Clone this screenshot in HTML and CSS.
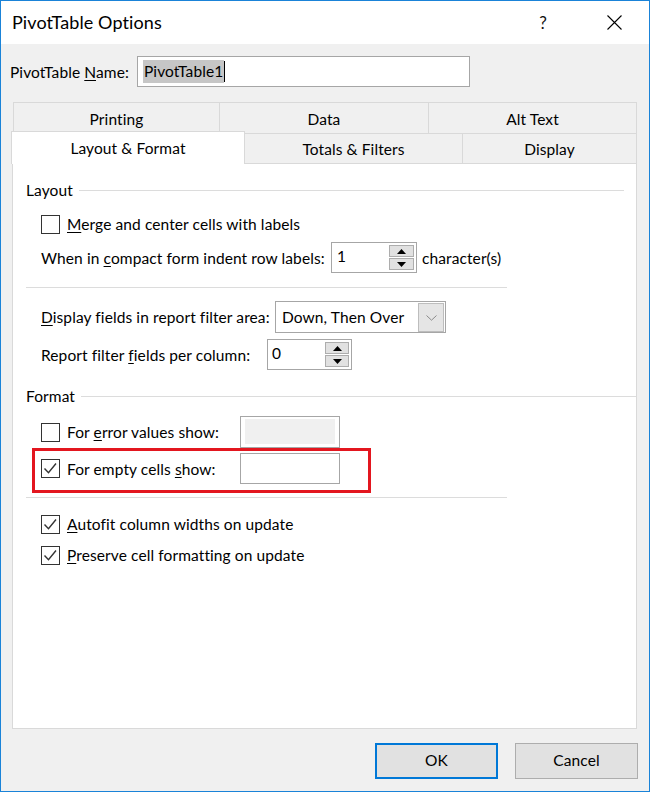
FILE: index.html
```html
<!DOCTYPE html>
<html lang="en">
<head>
<meta charset="utf-8">
<title>PivotTable Options</title>
<link rel="stylesheet" href="styles.css">
</head>
<body>
<div class="window">
  <div class="titlebar">
    <span class="title">PivotTable Options</span>
    <span class="help">?</span>
    <svg class="close" width="15" height="15" viewBox="0 0 15 15"><path d="M0.5 0.5 L14.5 14.5 M14.5 0.5 L0.5 14.5" stroke="#000" stroke-width="1.1" fill="none"/></svg>
  </div>

  <div class="name-row">
    <span class="name-label">PivotTable <u>N</u>ame:</span>
    <div class="textbox name-box"><span class="sel">PivotTable1</span><span class="caret"></span></div>
  </div>

  <div class="tabs">
    <div class="tab-row row1">
      <div class="tab t-printing">Printing</div>
      <div class="tab t-data">Data</div>
      <div class="tab t-alt">Alt Text</div>
    </div>
    <div class="tab-row row2">
      <div class="tab t-layout active">Layout &amp; Format</div>
      <div class="tab t-totals">Totals &amp; Filters</div>
      <div class="tab t-display">Display</div>
    </div>
  </div>

  <div class="panel">
    <div class="group-head head-layout">Layout</div>

    <div class="row check-row merge-row">
      <span class="checkbox"></span>
      <span class="label"><u>M</u>erge and center cells with labels</span>
    </div>

    <div class="row spin-row when-row">
      <span class="label fixed w-when">When in <u>c</u>ompact form indent row labels:</span>
      <div class="spin spin-when">
        <span class="spin-text">1</span>
        <div class="spin-btns">
          <span class="spin-btn"><svg width="9" height="5" viewBox="0 0 9 5"><path d="M0 5 L4.5 0 L9 5 Z" fill="#000"/></svg></span>
          <span class="spin-btn"><svg width="9" height="5" viewBox="0 0 9 5"><path d="M0 0 L4.5 5 L9 0 Z" fill="#000"/></svg></span>
        </div>
      </div>
      <span class="label after">character(s)</span>
    </div>

    <div class="separator sep-1"></div>

    <div class="row combo-row">
      <span class="label fixed w-display"><u>D</u>isplay fields in report filter area:</span>
      <div class="combo">
        <span class="combo-text">Down, Then Over</span>
        <span class="combo-btn"><svg width="11" height="6" viewBox="0 0 11 6"><path d="M0.5 0.5 L5.5 5.2 L10.5 0.5" stroke="#8a8a8a" stroke-width="1" fill="none"/></svg></span>
      </div>
    </div>

    <div class="row spin-row report-row">
      <span class="label fixed w-report">Report filter <u>f</u>ields per column:</span>
      <div class="spin spin-report">
        <span class="spin-text">0</span>
        <div class="spin-btns">
          <span class="spin-btn"><svg width="9" height="5" viewBox="0 0 9 5"><path d="M0 5 L4.5 0 L9 5 Z" fill="#000"/></svg></span>
          <span class="spin-btn"><svg width="9" height="5" viewBox="0 0 9 5"><path d="M0 0 L4.5 5 L9 0 Z" fill="#000"/></svg></span>
        </div>
      </div>
    </div>

    <div class="group-head head-format">Format</div>

    <div class="row input-row error-row">
      <span class="checkbox"></span>
      <span class="label fixed w-show">For <u>e</u>rror values show:</span>
      <div class="textbox small-box disabled"><span class="fill"></span></div>
    </div>

    <div class="row input-row empty-row">
      <span class="checkbox checked"><svg width="19" height="19" viewBox="0 0 19 19"><polyline points="3.5,9.5 7.5,13.8 15,4.5" stroke="#333" stroke-width="1.4" fill="none"/></svg></span>
      <span class="label fixed w-show">For empty cells <u>s</u>how:</span>
      <div class="textbox small-box"></div>
      <span class="highlight"></span>
    </div>

    <div class="separator sep-2"></div>

    <div class="row check-row autofit-row">
      <span class="checkbox checked"><svg width="19" height="19" viewBox="0 0 19 19"><polyline points="3.5,9.5 7.5,13.8 15,4.5" stroke="#333" stroke-width="1.4" fill="none"/></svg></span>
      <span class="label"><u>A</u>utofit column widths on update</span>
    </div>

    <div class="row check-row preserve-row">
      <span class="checkbox checked"><svg width="19" height="19" viewBox="0 0 19 19"><polyline points="3.5,9.5 7.5,13.8 15,4.5" stroke="#333" stroke-width="1.4" fill="none"/></svg></span>
      <span class="label"><u>P</u>reserve cell formatting on update</span>
    </div>
  </div>

  <div class="buttons">
    <button class="btn btn-default">OK</button>
    <button class="btn">Cancel</button>
  </div>
</div>
</body>
</html>
```

FILE: styles.css
```css
* { box-sizing: border-box; }

html, body {
  margin: 0;
  padding: 0;
  background: #f0f0f0;
}

body {
  font-family: Lato, "Liberation Sans", sans-serif;
  font-size: 15.5px;
  letter-spacing: 0.1px;
  color: #000;
}

u { text-decoration: underline; text-underline-offset: 2px; text-decoration-thickness: 1px; }

.window {
  width: 650px;
  height: 792px;
  border: 1px solid #1a83d8;
  background: #f0f0f0;
  display: flex;
  flex-direction: column;
  overflow: hidden;
}

/* Title bar */
.titlebar {
  height: 43px;
  flex: none;
  background: #fff;
  display: flex;
  align-items: center;
  padding-left: 11px;
  padding-right: 27px;
}
.title {
  font-size: 18px;
  flex: 1;
  padding-bottom: 1px;
}
.help {
  font-size: 17px;
  margin-right: 60px;
  color: #111;
}
.close { display: block; margin-bottom: 1px; }

/* Name row */
.name-row {
  flex: none;
  margin-top: 12px;
  height: 31px;
  display: flex;
  align-items: center;
  padding-left: 9px;
}
.name-label {
  width: 127px;
  flex: none;
  white-space: nowrap;
}
.textbox {
  background: #fff;
  border: 1px solid #a6a6a6;
}
.name-box {
  width: 333px;
  height: 31px;
  display: flex;
  align-items: center;
  padding: 3px 5px;
}
.sel {
  background: #c6c6c6;
  height: 23px;
  line-height: 23px;
  padding: 0 1px;
}
.caret {
  width: 1px;
  height: 21px;
  background: #000;
}

/* Tabs */
.tabs {
  flex: none;
  margin-top: 15px;
}
.tab-row {
  display: flex;
}
.row1 {
  margin-left: 12px;
  height: 31px;
}
.row2 {
  margin-left: 10px;
  height: 30px;
  align-items: flex-end;
}
.tab {
  display: flex;
  align-items: center;
  justify-content: center;
  background: #f0f0f0;
  border-top: 1px solid #d9d9d9;
  border-left: 1px solid #d9d9d9;
  white-space: nowrap;
}
.row1 .tab { height: 31px; padding-top: 1px; }
.row2 .tab { height: 30px; padding-top: 1px; }
.t-printing { width: 206px; }
.t-data { width: 209px; }
.t-alt { width: 209px; border-right: 1px solid #d9d9d9; }
.t-layout {
  width: 234px;
  border-right: 1px solid #d9d9d9;
}
.row2 .tab.active {
  background: #fff;
  height: 33px;
  margin-top: -2px;
  margin-bottom: -1px;
  position: relative;
  z-index: 1;
  padding-top: 0;
  padding-bottom: 1px;
}
.t-totals { width: 217px; border-left: none; }
.t-display { width: 175px; border-right: 1px solid #d9d9d9; }

/* Panel */
.panel {
  flex: none;
  margin-left: 11px;
  width: 625px;
  height: 566px;
  background: #fff;
  border: 1px solid #d9d9d9;
  display: flex;
  flex-direction: column;
}

.group-head {
  display: flex;
  align-items: center;
  height: 20px;
  margin-top: 16px;
  margin-left: 13px;
  white-space: nowrap;
}
.group-head::after {
  content: "";
  flex: 1;
  height: 1px;
  background: #dcdcdc;
  margin-left: 6px;
  margin-top: 1px;
}
.head-layout { margin-right: 12px; }
.head-format { margin-right: 0; }

.row {
  display: flex;
  align-items: center;
  margin-left: 28px;
  white-space: nowrap;
}
.label.fixed { flex: none; }
.w-when { width: 290px; }
.w-display { width: 234px; }
.w-report { width: 226px; }
.w-show { width: 173px; }

.check-row { height: 28px; }
.merge-row { margin-top: 10px; }
.autofit-row { margin-top: 12px; }
.preserve-row { margin-top: 3px; }

.checkbox {
  flex: none;
  width: 19px;
  height: 19px;
  border: 1px solid #333;
  background: #fff;
  margin-right: 7px;
  position: relative;
}
.checkbox svg {
  position: absolute;
  left: -1px;
  top: -1px;
}

.when-row { margin-top: 4px; height: 31px; }
.report-row { margin-top: 6px; height: 31px; }

.spin {
  flex: none;
  height: 31px;
  background: #fff;
  border: 1px solid #a6a6a6;
  display: flex;
  align-items: stretch;
  padding: 2px 2px 2px 0;
}
.spin-when { width: 86px; }
.spin-report { width: 85px; }
.spin-text {
  flex: 1;
  display: flex;
  align-items: center;
  padding-left: 5px;
  padding-bottom: 3px;
}
.spin-report .spin-text { padding-left: 4px; }
.spin-btns {
  width: 25px;
  display: flex;
  flex-direction: column;
  gap: 1px;
}
.spin-report .spin-btns { width: 24px; }
.spin-btn {
  flex: 1;
  background: #e1e1e1;
  border: 1px solid #adadad;
  display: flex;
  align-items: center;
  justify-content: center;
}
.label.after { margin-left: 5px; }

.separator {
  height: 1px;
  background: #dcdcdc;
  margin-left: 13px;
  width: 481px;
  flex: none;
}
.sep-1 { margin-top: 14px; }
.sep-2 { margin-top: 13px; }

.combo-row { margin-top: 13px; height: 32px; }
.combo {
  flex: none;
  width: 171px;
  height: 32px;
  background: #fff;
  border: 1px solid #a6a6a6;
  display: flex;
  align-items: stretch;
  padding: 1px 1px 0 0;
}
.combo-text {
  flex: 1;
  display: flex;
  align-items: center;
  padding-left: 6px;
  padding-bottom: 2px;
}
.combo-btn {
  width: 26px;
  background: #e5e5e5;
  border: 1px solid #bdbdbd;
  display: flex;
  align-items: center;
  justify-content: center;
}

.input-row { height: 31px; }
.error-row { margin-top: 10px; height: 32px; }
.empty-row { margin-top: 5px; position: relative; }
.small-box {
  flex: none;
  width: 100px;
  height: 31px;
}
.error-row .small-box { height: 32px; }
.small-box.disabled {
  padding: 2px 4px 3px 4px;
  display: flex;
}
.small-box .fill {
  flex: 1;
  background: #f0f0f0;
}
.highlight {
  position: absolute;
  left: -9px;
  top: -5px;
  width: 339px;
  height: 45px;
  border: 3px solid #e3161f;
  pointer-events: none;
}

/* Buttons */
.buttons {
  flex: none;
  display: flex;
  justify-content: flex-end;
  gap: 17px;
  margin-top: 14px;
  padding-right: 11px;
}
.btn {
  width: 123px;
  height: 36px;
  background: #e1e1e1;
  border: 1px solid #adadad;
  font-family: Lato, "Liberation Sans", sans-serif;
  font-size: 15.5px;
  letter-spacing: 0.1px;
  color: #000;
  padding: 0 0 2px 0;
  margin: 0;
}
.btn-default {
  border: 2px solid #0078d7;
}
```
